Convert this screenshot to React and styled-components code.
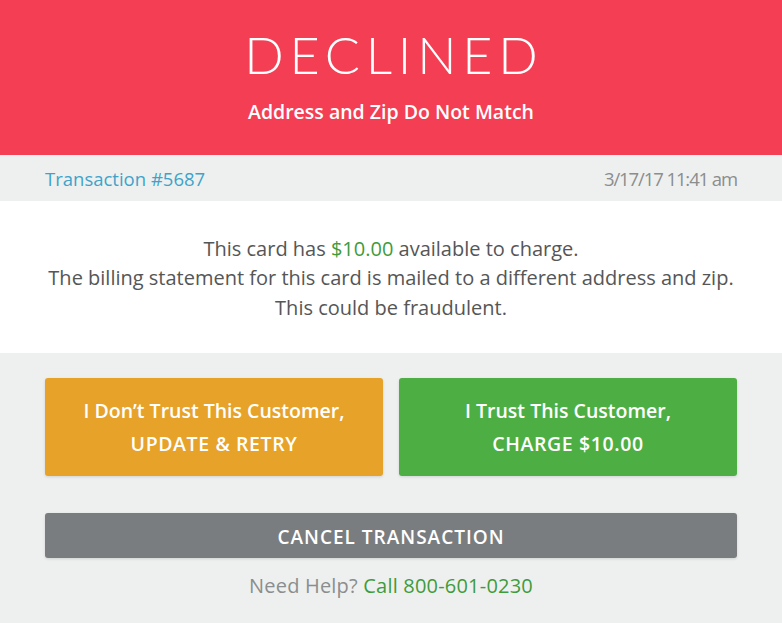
import React from "react"
import styled, { createGlobalStyle } from "styled-components"

const color = {
  red: "#f43e54",
  band: "#eef0ef",
  blue: "#3fa3c9",
  gray: "#8b8d8e",
  text: "#555657",
  green: "#3f9b3c",
  orange: "#e7a229",
  go: "#4daf43",
  cancel: "#797d80",
}
const font = `"Open Sans", "Lato", sans-serif`

const GlobalStyle = createGlobalStyle`
  html, body {
    margin: 0;
    padding: 0;
    background: ${color.band};
    font-family: ${font};
    -webkit-font-smoothing: antialiased;
  }
`

const Page = styled.div`
  width: 782px;
  height: 623px;
  display: flex;
  flex-direction: column;
  background: ${color.band};
`
const Header = styled.header`
  height: 155px;
  background: ${color.red};
  color: #fff;
  display: flex;
  flex-direction: column;
  align-items: center;
  box-sizing: border-box;
  padding-top: 20px;
`
const Status = styled.h1`
  margin: 0;
  font-family: "Lato", sans-serif;
  font-size: 52px;
  font-weight: 300;
  letter-spacing: 5.8px;
  padding-left: 5.8px;
  line-height: 68px;
`
const Reason = styled.h2`
  margin: 11px 0 0;
  font-size: 19.5px;
  font-weight: 600;
  line-height: 26px;
`
const InfoBar = styled.div`
  height: 46px;
  display: flex;
  align-items: center;
  justify-content: space-between;
  padding: 0 45px;
  font-size: 18.5px;
`
const TxLink = styled.span`
  color: ${color.blue};
`
const TxDate = styled.span`
  color: ${color.gray};
  letter-spacing: -1.1px;
`
const Message = styled.div`
  height: 152px;
  background: #fff;
  display: flex;
  flex-direction: column;
  align-items: center;
  justify-content: center;
  color: ${color.text};
  font-size: 20px;
  line-height: 29.5px;
  padding-top: 2px;
  box-sizing: border-box;
`
const Amount = styled.span`
  color: ${color.green};
`
const Actions = styled.div`
  flex: 1;
  padding: 25px 45px 0;
  display: flex;
  flex-direction: column;
`
const Choices = styled.div`
  display: grid;
  grid-template-columns: 1fr 1fr;
  gap: 16px;
`
const Button = styled.button`
  border: 0;
  border-radius: 3px;
  background: ${p => p.$bg};
  color: #fff;
  font-family: ${font};
  font-weight: 600;
  font-size: 19.5px;
  line-height: 33px;
  height: ${p => (p.$tall ? "98px" : "45px")};
  box-shadow: 0 1px 3px rgba(0, 0, 0, 0.12);
  padding: 0;
  cursor: pointer;
`
const Caps = styled.span`
  letter-spacing: 0.6px;
`
const Cancel = styled(Button)`
  margin-top: 37px;
  font-size: 19px;
  letter-spacing: 1px;
  padding-top: 3px;
`
const Help = styled.p`
  margin: 14px 0 0;
  text-align: center;
  font-size: 20px;
  letter-spacing: 0.2px;
  color: ${color.gray};
`
const Phone = styled.span`
  color: ${color.green};
`

const App = () => (
  <Page>
    <GlobalStyle />
    <Header>
      <Status>DECLINED</Status>
      <Reason>Address and Zip Do Not Match</Reason>
    </Header>
    <InfoBar>
      <TxLink>Transaction #5687</TxLink>
      <TxDate>3/17/17 11:41 am</TxDate>
    </InfoBar>
    <Message>
      <div>
        This card has <Amount>$10.00</Amount> available to charge.
      </div>
      <div>
        The billing statement for this card is mailed to a different address
        and zip.
      </div>
      <div>This could be fraudulent.</div>
    </Message>
    <Actions>
      <Choices>
        <Button $bg={color.orange} $tall>
          I Don’t Trust This Customer,
          <br />
          <Caps>UPDATE &amp; RETRY</Caps>
        </Button>
        <Button $bg={color.go} $tall>
          I Trust This Customer,
          <br />
          <Caps>CHARGE $10.00</Caps>
        </Button>
      </Choices>
      <Cancel $bg={color.cancel}>CANCEL TRANSACTION</Cancel>
      <Help>
        Need Help? <Phone>Call 800-601-0230</Phone>
      </Help>
    </Actions>
  </Page>
)

export default App
